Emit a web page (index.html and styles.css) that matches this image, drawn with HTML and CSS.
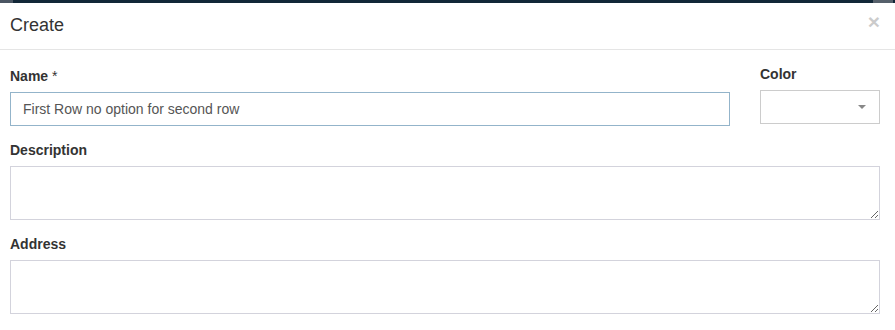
FILE: index.html
```html
<!DOCTYPE html>
<html>
<head>
<meta charset="utf-8">
<title>Create</title>
<link rel="stylesheet" href="styles.css">
</head>
<body>
<div class="backdrop-strip">
  <span class="strip-patch strip-left"></span>
  <span class="strip-patch strip-right"></span>
</div>
<div class="modal">
  <div class="modal-header">
    <h4 class="modal-title">Create</h4>
    <button class="close" type="button">×</button>
  </div>
  <form class="modal-body">
    <div class="row">
      <div class="form-group group-name">
        <label class="label">Name <span class="req">*</span></label>
        <input class="control control-focus" type="text" value="First Row no option for second row">
      </div>
      <div class="form-group group-color">
        <label class="label">Color</label>
        <div class="select">
          <span class="caret"></span>
        </div>
      </div>
    </div>
    <div class="form-group">
      <label class="label">Description</label>
      <textarea class="control area"></textarea>
    </div>
    <div class="form-group">
      <label class="label">Address</label>
      <textarea class="control area"></textarea>
    </div>
  </form>
</div>
</body>
</html>
```

FILE: styles.css
```css
* { box-sizing: border-box; }

html, body {
  margin: 0;
  padding: 0;
  background: #ffffff;
  font-family: "Liberation Sans", Arial, sans-serif;
  font-size: 14px;
  line-height: 1.42857;
  color: #333333;
}

.backdrop-strip {
  height: 3px;
  background: #122738;
  display: flex;
  justify-content: space-between;
}

.strip-patch {
  display: block;
  height: 3px;
  background: #4b5663;
}

.strip-left { width: 13px; }
.strip-right { width: 20px; margin-right: 2px; background: #56606b; }

.modal {
  width: 895px;
}

.modal-header {
  display: flex;
  justify-content: space-between;
  align-items: flex-start;
  padding: 10px 15px 10px 10px;
  border-bottom: 1px solid #e5e5e5;
}

.modal-title {
  margin: 0;
  font-size: 18px;
  font-weight: normal;
  line-height: 1.42857;
  color: #333333;
}

.close {
  margin-top: -2px;
  padding: 0;
  border: 0;
  background: transparent;
  font-family: "Liberation Sans", Arial, sans-serif;
  font-size: 21px;
  font-weight: bold;
  line-height: 1;
  color: #000000;
  opacity: 0.2;
  text-shadow: 0 1px 0 #ffffff;
  cursor: pointer;
}

.modal-body {
  margin: 0;
  padding: 15px 15px 0 10px;
}

.row {
  display: flex;
  gap: 30px;
}

.form-group {
  margin-bottom: 15px;
}

.group-name {
  width: 720px;
  padding-top: 2px;
}

.group-color {
  width: 120px;
}

.label {
  display: block;
  margin-bottom: 5px;
  font-weight: bold;
  color: #333333;
}

.req {
  font-weight: normal;
}

.control {
  display: block;
  width: 100%;
  height: 34px;
  margin: 0;
  padding: 6px 12px;
  font-family: "Liberation Sans", Arial, sans-serif;
  font-size: 14px;
  line-height: 1.42857;
  color: #555555;
  background: #ffffff;
  border: 1px solid #ccccd6;
  border-radius: 0;
  outline: none;
}

.control-focus {
  border-color: #93b4ca;
}

.area {
  height: 54px;
  resize: vertical;
  border-color: #d3d3dc;
}

.select {
  position: relative;
  height: 34px;
  border: 1px solid #cccccc;
  background: #ffffff;
}

.caret {
  position: absolute;
  right: 13px;
  top: 14px;
  width: 0;
  height: 0;
  border-style: solid;
  border-width: 4px 4px 0 4px;
  border-color: #888888 transparent transparent transparent;
}
```
